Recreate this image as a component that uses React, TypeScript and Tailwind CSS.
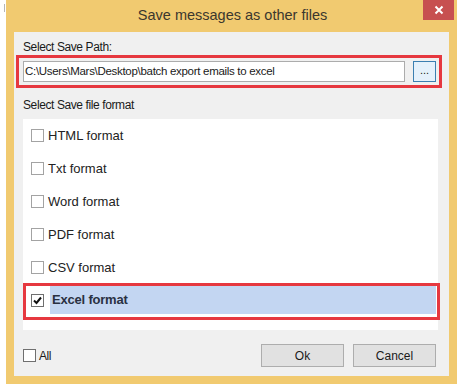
const formats = ["HTML format", "Txt format", "Word format", "PDF format", "CSV format"];

const Box = ({ checked = false, dark = false }: { checked?: boolean; dark?: boolean }) => (
    <div
        className={`w-[13px] h-[13px] bg-white border flex items-center justify-center shrink-0 ${
            dark ? "border-[#6f6f6f]" : "border-[#a3a3a3]"
        }`}
    >
        {checked && (
            <svg width="9" height="9" viewBox="0 0 9 9">
                <path d="M1 4.5 L3.5 7 L8 1.5" stroke="#111" strokeWidth="2" fill="none" />
            </svg>
        )}
    </div>
);

const App = () => {
    return (
        <div
            className="w-[458px] h-[387px] bg-white overflow-hidden relative"
            style={{ fontFamily: '"Liberation Sans", Arial, sans-serif' }}
        >
            <div className="absolute left-[4px] top-[4px] w-px h-[8px] bg-[#b5b5b5]" />
            <div className="ml-[6px] w-[451px] h-[384px] bg-[#f1ca70] flex flex-col">
                {/* title bar */}
                <div className="h-[32px] relative flex items-center justify-center">
                    <span className="text-[14.5px] text-[#3b372e] pb-[1px] pl-[2px]">Save messages as other files</span>
                    <div className="absolute right-[3px] top-0 w-[31px] h-[20px] bg-[#c75050] flex items-center justify-center">
                        <svg width="10" height="10" viewBox="0 0 10 10">
                            <path d="M1.5 1.5 L8.5 8.5 M8.5 1.5 L1.5 8.5" stroke="#fff" strokeWidth="2" />
                        </svg>
                    </div>
                </div>

                {/* body */}
                <div className="mx-[8px] mb-[8px] flex-1 bg-[#f0f0f0] flex flex-col text-[#1a1a1a]">
                    <div className="pl-[9px] pt-[7px] h-[23px] text-[12px] leading-[16px] tracking-[-0.4px]">Select Save Path:</div>
                    <div className="ml-[2px] w-[426px] h-[33px] border-[3px] border-[#e6383f] flex items-center pl-[4px] pr-[3px] gap-[8px]">
                        <div className="flex-1 h-[21px] bg-white border border-[#acacac] flex items-center pl-[1px] text-[11.5px] whitespace-nowrap overflow-hidden tracking-[-0.3px]">
                            C:\Users\Mars\Desktop\batch export emails to excel
                        </div>
                        <div className="w-[23px] h-[21px] bg-[#e5f1fb] border border-[#3c7fb1] flex items-center justify-center text-[11px] leading-none pb-[2px]">
                            ...
                        </div>
                    </div>
                    <div className="pl-[9px] pt-[9px] h-[31px] text-[12px] leading-[16px] tracking-[-0.4px]">Select Save file format</div>

                    <div className="ml-[9px] w-[415px] h-[211px] bg-white flex flex-col text-[13px] text-[#222]">
                        {formats.map((f) => (
                            <div key={f} className="h-[33px] flex items-center pl-[8px] gap-[4px] shrink-0">
                                <Box />
                                <span>{f}</span>
                            </div>
                        ))}
                        <div className="-mt-px h-[37px] w-[417px] border-[3px] border-[#e6383f] flex items-start pl-[5px] shrink-0">
                            <div className="h-[28px] flex items-center">
                                <Box checked dark />
                            </div>
                            <div className="ml-[6px] flex-1 mr-px h-[28px] bg-[#c3d6f2] flex items-center pl-[2px] font-bold text-[#2a3142] tracking-[-0.2px]">
                                Excel format
                            </div>
                        </div>
                    </div>

                    <div className="flex items-center mt-[14px] pl-[9px] h-[23px]">
                        <Box dark />
                        <span className="ml-[3px] text-[12px] tracking-[-0.5px]">All</span>
                        <div className="ml-auto mr-[13px] flex gap-[9px] text-[12px]">
                            <div className="w-[83px] h-[23px] bg-[#e1e1e1] border border-[#adadad] flex items-center justify-center">
                                Ok
                            </div>
                            <div className="w-[83px] h-[23px] bg-[#e1e1e1] border border-[#adadad] flex items-center justify-center">
                                Cancel
                            </div>
                        </div>
                    </div>
                </div>
            </div>
        </div>
    );
};

export default App;
